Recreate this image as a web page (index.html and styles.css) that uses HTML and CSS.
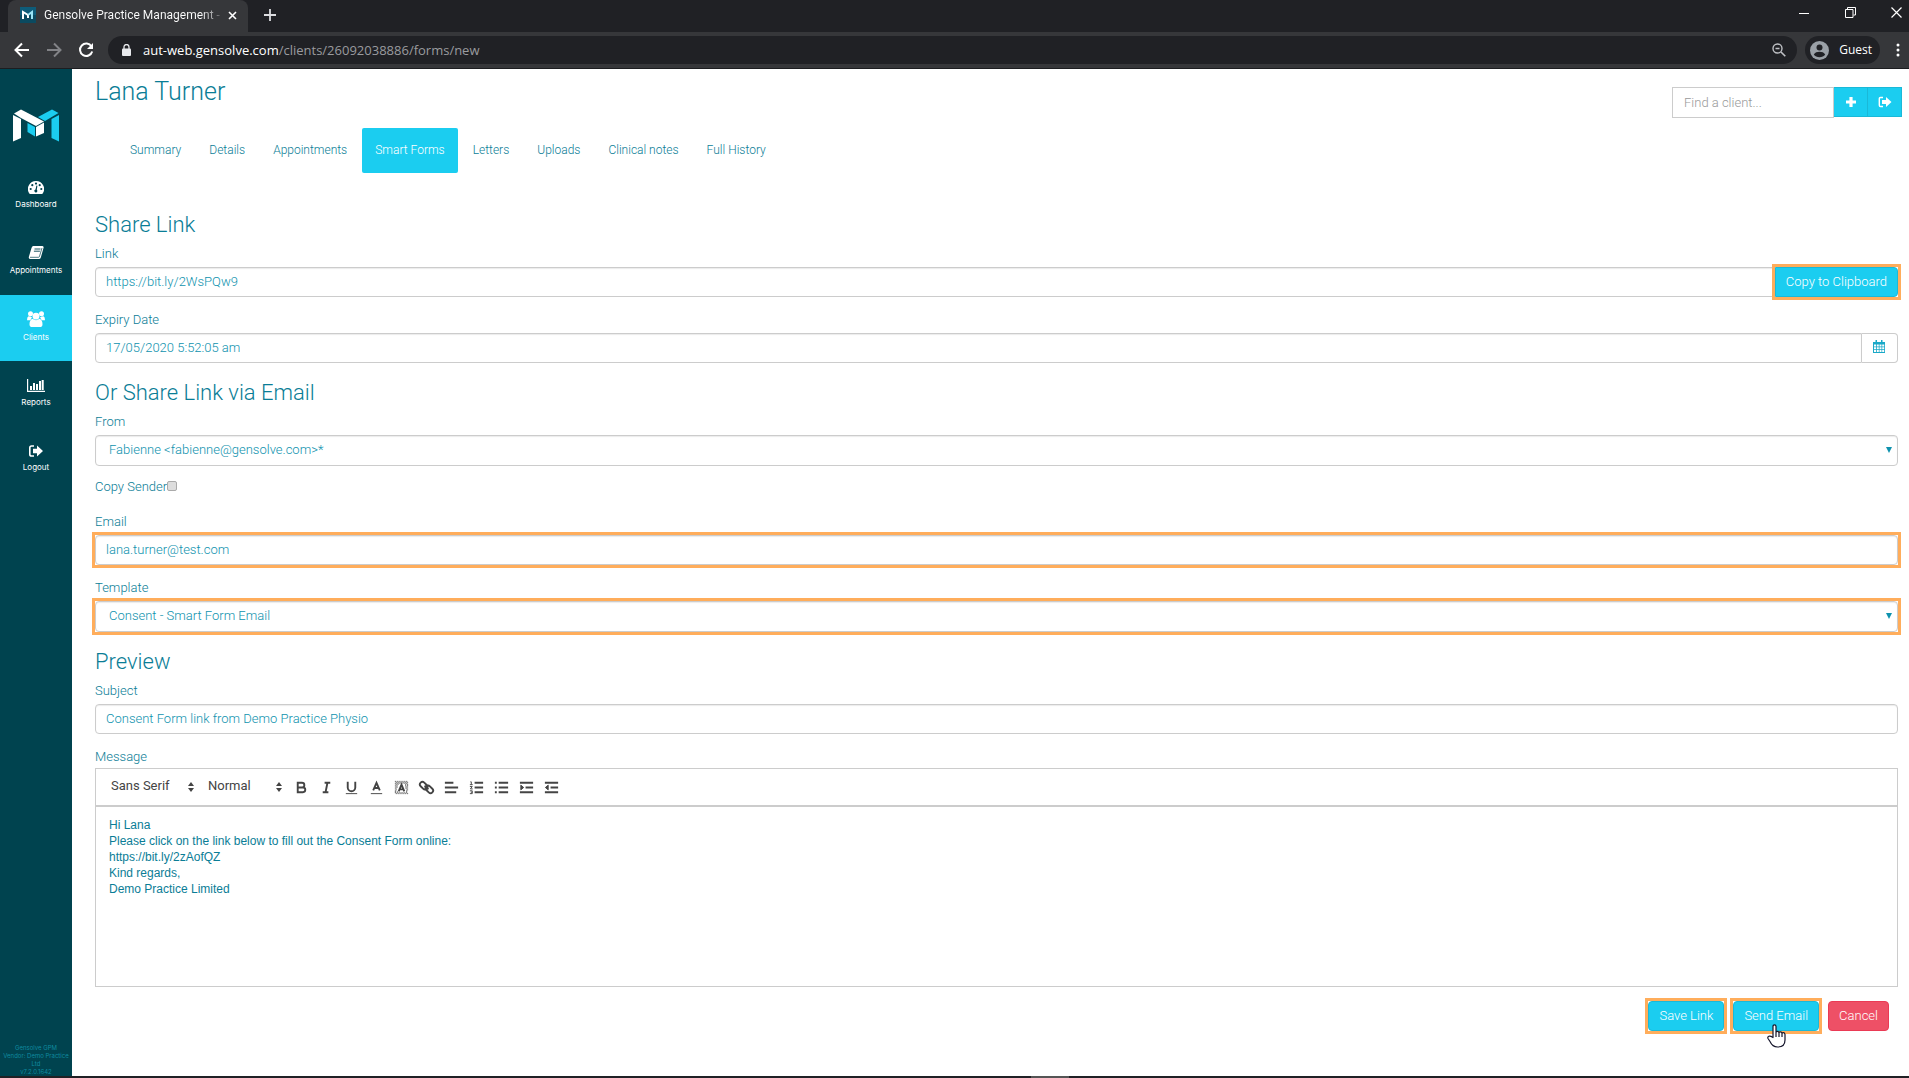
FILE: index.html
```html
<!DOCTYPE html>
<html lang="en">
<head>
    <meta charset="UTF-8">
    <meta name="viewport" content="width=device-width, initial-scale=1.0">
    <title>Gensolve Practice Management</title>
    <link rel="stylesheet" href="styles.css">
</head>
<body>
    <header class="browser">
        <div class="tab-strip">
            <div class="browser-tab">
                <svg class="favicon" viewBox="0 0 16 16">
                    <rect width="16" height="16" fill="#0b4a60"/>
                    <rect width="16" height="8" fill="#11698a" opacity=".6"/>
                    <path d="M3 12V5l5 3v3M3 5v7" fill="none" stroke="#fff" stroke-width="2"/>
                    <path d="M8 8l4-3v7" fill="none" stroke="#9be4f5" stroke-width="2"/>
                </svg>
                <span class="tab-title">Gensolve Practice Management -</span>
                <button class="tab-close" aria-label="Close tab">
                    <svg width="9" height="9" viewBox="0 0 9 9"><path d="M1 1l7 7M8 1L1 8" stroke="#fff" stroke-width="1.6"/></svg>
                </button>
            </div>
            <button class="new-tab" aria-label="New tab">
                <svg width="12" height="12" viewBox="0 0 12 12"><path d="M6 0v12M0 6h12" stroke="#dcdde0" stroke-width="1.8"/></svg>
            </button>
            <div class="window-buttons">
                <button aria-label="Minimise"><svg width="11" height="11" viewBox="0 0 11 11"><path d="M0 6.5h10" stroke="#fff"/></svg></button>
                <button aria-label="Restore"><svg width="11" height="11" viewBox="0 0 11 11"><path d="M.5 2.500h7.500v8h-7.500zM2.500 2.500v-2h8v7.500h-2" fill="none" stroke="#fff"/></svg></button>
                <button aria-label="Close"><svg width="11" height="11" viewBox="0 0 11 11"><path d="M.5.5l10 10M10.500.5l-10 10" stroke="#fff" stroke-width="1.200"/></svg></button>
            </div>
        </div>
        <div class="toolbar">
            <button aria-label="Back"><svg width="16" height="16" viewBox="0 0 16 16"><path d="M15 8H2M8 1.500L1.500 8 8 14.500" fill="none" stroke="#fff" stroke-width="2"/></svg></button>
            <button aria-label="Forward"><svg width="16" height="16" viewBox="0 0 16 16"><path d="M1 8h13M8 1.500L14.500 8 8 14.500" fill="none" stroke="#828387" stroke-width="2"/></svg></button>
            <button aria-label="Reload"><svg width="16" height="16" viewBox="0 0 16 16"><path d="M13.500 4.500A6.200 6.200 0 1 0 14.200 9.500" fill="none" stroke="#fff" stroke-width="2"/><path d="M15 1v6H9z" fill="#fff"/></svg></button>
            <div class="address">
                <svg width="9" height="12" viewBox="0 0 9 12"><rect y="4.500" width="9" height="7.500" rx="1" fill="#e8eaed"/><path d="M2 5V3a2.500 2.500 0 0 1 5 0v2" fill="none" stroke="#e8eaed" stroke-width="1.300"/></svg>
                <span class="url"><b>aut-web.gensolve.com</b>/clients/26092038886/forms/new</span>
                <svg width="14" height="14" viewBox="0 0 14 14"><circle cx="5.500" cy="5.500" r="4.500" fill="none" stroke="#bfc1c5" stroke-width="1.400"/><path d="M3.500 5.500h4M9 9l4.300 4.300" stroke="#bfc1c5" stroke-width="1.600"/></svg>
            </div>
            <button class="guest">
                <svg width="19" height="19" viewBox="0 0 19 19"><circle cx="9.500" cy="9.500" r="9.500" fill="#9aa0a6"/><circle cx="9.500" cy="6.500" r="3" fill="#202125"/><path d="M3.800 13.500c1.200-2 3.200-2.700 5.700-2.700s4.500.7 5.700 2.700c-1.300 1.700-3.200 2.700-5.700 2.700s-4.400-1-5.700-2.700z" fill="#202125"/></svg>
                Guest
            </button>
            <button class="menu" aria-label="Menu"><svg width="4" height="14" viewBox="0 0 4 14" fill="#fff"><circle cx="2" cy="2" r="1.500"/><circle cx="2" cy="7" r="1.500"/><circle cx="2" cy="12" r="1.500"/></svg></button>
        </div>
    </header>

    <div class="app">
        <nav class="sidebar">
            <svg class="logo" width="46" height="33" viewBox="0 0 46 33">
                <path d="M0 6l8 4v19l-8 3.500z" fill="#fff"/>
                <path d="M1 4.500L8 .5l23 12-8 4.500L8 9z" fill="#fff"/>
                <path d="M23 18l8-4.500V24l-8 3.500z" fill="#fff"/>
                <path d="M14.500 14l7.500 4v9.500L14.500 23z" fill="#1bcdf0"/>
                <path d="M25 8L39 .5l6.500 3.500L32 12z" fill="#1bcdf0"/>
                <path d="M46 6v26.500L38.500 29V10z" fill="#1bcdf0"/>
            </svg>
            <a href="#" class="side-link">
                <svg width="16" height="13" viewBox="0 0 16 13"><path d="M8 0a8 8 0 0 0-7 12l.8 1h12.400l.8-1A8 8 0 0 0 8 0z" fill="#fff"/><g fill="#00434f"><circle cx="2.700" cy="8" r="1.100"/><circle cx="4.300" cy="4.200" r="1.100"/><circle cx="8" cy="2.600" r="1.100"/><circle cx="11.700" cy="4.200" r="1.100"/><circle cx="13.300" cy="8" r="1.100"/><path d="M8.400 4.500l1 .3-.6 4a1.500 1.500 0 1 1-1.300-.3z"/></g></svg>
                Dashboard
            </a>
            <a href="#" class="side-link">
                <svg width="16" height="14" viewBox="0 0 16 14"><path d="M5 0h9.500q1.500.3 1 2l-2.700 9.500q-.4 1.500-2 1.500H2Q.5 13 .8 11L3.500 2Q4 .4 5 0z" fill="#fff"/><path d="M6.500 3h6M5.900 5.200h6" stroke="#00434f" stroke-width=".9"/><path d="M2 11.300h8.500q.8 0 1-1L14 2" fill="none" stroke="#00434f" stroke-width=".7"/></svg>
                Appointments
            </a>
            <a href="#" class="side-link active">
                <svg width="18" height="16" viewBox="0 0 18 16" fill="#fff"><circle cx="3.500" cy="2.700" r="2.500"/><circle cx="14.500" cy="2.700" r="2.500"/><circle cx="9" cy="5.200" r="3.400"/><path d="M5 6.200q-2-.9-3.500-.9Q0 6 0 9.200h3.300zM13 6.200q2-.9 3.500-.9Q18 6 18 9.200h-3.300z"/><path d="M5.500 7.800Q2.500 9 2.500 13.200q0 2.800 2.500 2.800h8q2.500 0 2.500-2.800 0-4.200-3-5.400Q9 10.500 5.500 7.800z"/></svg>
                Clients
            </a>
            <a href="#" class="side-link">
                <svg width="18" height="13" viewBox="0 0 18 13" fill="#fff"><path d="M0 0h1.200v11.800H18V13H0z"/><path d="M3 7h2v4H3zM6 4h2v7H6zM9 5h2v6H9zM12 2h2v9h-2zM14.700 1h2v10h-2z"/></svg>
                Reports
            </a>
            <a href="#" class="side-link">
                <svg width="14" height="12" viewBox="0 0 14 12"><path d="M5 1H2.500Q.8 1 .8 2.800v6.400Q.8 11 2.500 11H5" fill="none" stroke="#fff" stroke-width="1.600"/><path d="M4 3.700h4V.6L14 6l-6 5.400V8.300H4z" fill="#fff"/></svg>
                Logout
            </a>
            <p class="version">Gensolve GPM<br>Vendor: Demo Practice<br>Ltd<br>v7.2.0.1642</p>
        </nav>

        <main class="content">
            <div class="page-top">
                <h1>Lana Turner</h1>
                <form class="search">
                    <input type="text" placeholder="Find a client..." aria-label="Find a client">
                    <button type="button" aria-label="Add client"><svg width="12" height="12" viewBox="0 0 12 12"><path d="M6 1v10M1 6h10" stroke="#fff" stroke-width="3.200"/></svg></button>
                    <button type="button" aria-label="Open client"><svg width="14" height="12" viewBox="0 0 14 12"><path d="M5 1.500H2.500Q1.300 1.500 1.300 2.800v6.400q0 1.300 1.200 1.300H5" fill="none" stroke="#fff" stroke-width="1.400"/><path d="M4 4h4V1l5.500 5L8 11V8H4z" fill="#fff"/></svg></button>
                </form>
            </div>

            <nav class="tabs">
                <a href="#">Summary</a>
                <a href="#">Details</a>
                <a href="#">Appointments</a>
                <a href="#" class="active">Smart Forms</a>
                <a href="#">Letters</a>
                <a href="#">Uploads</a>
                <a href="#">Clinical notes</a>
                <a href="#">Full History</a>
            </nav>

            <form class="share-form">
                <h2>Share Link</h2>
                <div class="form-group">
                    <label for="link">Link</label>
                    <div class="input-group">
                        <input type="text" id="link" class="form-control" value="https://bit.ly/2WsPQw9">
                        <div class="highlight">
                            <button type="button" class="btn">Copy to Clipboard</button>
                        </div>
                    </div>
                </div>
                <div class="form-group">
                    <label for="expiry">Expiry Date</label>
                    <div class="input-group">
                        <input type="text" id="expiry" class="form-control" value="17/05/2020 5:52:05 am">
                        <button type="button" class="addon" aria-label="Pick a date"><svg width="12" height="13" viewBox="0 0 12 13"><path d="M0 2h12v11H0z" fill="#1aa9c8"/><path d="M2.500 0h1.500v3H2.500zM8 0h1.500v3H8z" fill="#1aa9c8"/><path d="M1 4.500h2v2H1zM3.800 4.500h2v2h-2zM6.500 4.500h2v2h-2zM9.200 4.500h2v2h-2zM1 7.200h2v2H1zM3.800 7.200h2v2h-2zM6.500 7.200h2v2h-2zM9.200 7.200h2v2h-2zM1 10h2v2H1zM3.800 10h2v2h-2zM6.500 10h2v2h-2zM9.200 10h2v2h-2z" fill="#fff"/></svg></button>
                    </div>
                </div>

                <h2>Or Share Link via Email</h2>
                <div class="form-group">
                    <label for="from">From</label>
                    <div class="select-wrap">
                        <select id="from" class="form-control"><option>Fabienne &lt;fabienne@gensolve.com&gt;*</option></select>
                    </div>
                </div>
                <div class="check-row">
                    <label for="copySender">Copy Sender</label><input type="checkbox" id="copySender">
                </div>
                <div class="form-group">
                    <label for="email">Email</label>
                    <div class="highlight">
                        <input type="text" id="email" class="form-control" value="lana.turner@test.com">
                    </div>
                </div>
                <div class="form-group">
                    <label for="template">Template</label>
                    <div class="select-wrap highlight">
                        <select id="template" class="form-control"><option>Consent - Smart Form Email</option></select>
                    </div>
                </div>

                <h2>Preview</h2>
                <div class="form-group">
                    <label for="subject">Subject</label>
                    <input type="text" id="subject" class="form-control" value="Consent Form link from Demo Practice Physio">
                </div>
                <label for="message">Message</label>
                <div class="editor">
                    <div class="editor-tools">
                        <div class="picker picker-font">
                            <select aria-label="Font"><option>Sans Serif</option></select>
                            <svg width="6" height="10" viewBox="0 0 6 10" fill="#444"><path d="M0 4l3-4 3 4zM0 6l3 4 3-4z"/></svg>
                        </div>
                        <div class="picker">
                            <select aria-label="Size"><option>Normal</option></select>
                            <svg width="6" height="10" viewBox="0 0 6 10" fill="#444"><path d="M0 4l3-4 3 4zM0 6l3 4 3-4z"/></svg>
                        </div>
                        <button type="button" aria-label="Bold"><svg viewBox="0 0 18 18"><path d="M5 4h4.500a2.500 2.500 0 0 1 0 5H5zM5 9h5.500a2.500 2.500 0 0 1 0 5H5z"/></svg></button>
                        <button type="button" aria-label="Italic"><svg viewBox="0 0 18 18"><path d="M7 4h6M5 14h6M8 14l2-10"/></svg></button>
                        <button type="button" aria-label="Underline"><svg viewBox="0 0 18 18"><path d="M5 3v6a4 4 0 0 0 8 0V3"/><path class="thin" d="M3 15.500h12"/></svg></button>
                        <button type="button" aria-label="Text colour"><svg viewBox="0 0 18 18"><path d="M5.500 12L9 4l3.500 8M6.500 9.500h5"/><path class="thin" d="M3 15.500h12"/></svg></button>
                        <button type="button" aria-label="Background colour"><svg viewBox="0 0 18 18"><path class="dots" d="M2 2.500h14M3 3.500h13M2 4.500h14M3 5.500h3M13 5.500h3M2 6.500h3M13 6.500h3M3 7.500h2M13 7.500h3M2 8.500h3M14 8.500h2M3 9.500h2M13 9.500h3M2 10.500h2M14 10.500h2M3 11.500h1M15 11.500h1M2 12.500h2M14 12.500h2M2 13.500h3M14 13.500h2M2 14.500h14M3 15.500h13"/><path d="M6 13l3-7 3 7M7 11h4"/></svg></button>
                        <button type="button" aria-label="Link"><svg viewBox="0 0 18 18"><path d="M7 7l4 4"/><rect x="1.500" y="4.300" width="9" height="5.400" rx="2.700" transform="rotate(45 6 7)"/><rect x="7.500" y="8.300" width="9" height="5.400" rx="2.700" transform="rotate(45 12 11)"/></svg></button>
                        <button type="button" aria-label="Align"><svg viewBox="0 0 18 18"><path d="M2 4h9M2 9h14M2 14h12"/></svg></button>
                        <button type="button" aria-label="Numbered list"><svg viewBox="0 0 18 18"><path d="M7 4h9M7 9h9M7 14h9"/><path class="thin" d="M2.500 3h1v3M2 6h3M2 8h2.500L2.500 10.500H5M2 12.500h2.500v3H2M3 14h1.500"/></svg></button>
                        <button type="button" aria-label="Bullet list"><svg viewBox="0 0 18 18"><path d="M6 4h10M6 9h10M6 14h10M2 4h2M2 9h2M2 14h2"/></svg></button>
                        <button type="button" aria-label="Indent"><svg viewBox="0 0 18 18"><path d="M2 4h14M8 9h8M2 14h14"/><path class="fill" d="M3 6.500v5L6 9z"/></svg></button>
                        <button type="button" aria-label="Outdent"><svg viewBox="0 0 18 18"><path d="M2 4h14M8 9h8M2 14h14"/><path class="fill" d="M5.500 6.500v5L2.500 9z"/></svg></button>
                    </div>
                    <textarea id="message" rows="10">Hi Lana
Please click on the link below to fill out the Consent Form online:
https://bit.ly/2zAofQZ
Kind regards,
Demo Practice Limited</textarea>
                </div>

                <div class="actions">
                    <div class="highlight">
                        <button type="button" class="btn">Save Link</button>
                    </div>
                    <div class="highlight send">
                        <button type="button" class="btn">Send Email</button>
                        <svg class="pointer" width="19" height="24" viewBox="0 0 19 24"><path d="M6 13.500V2.500Q6 .8 7.500.8T9 2.500v6q0-1.200 1.400-1.200T12 8.800q.1-.9 1.400-.9T15 9.400q.2-.7 1.400-.7T18 10.300V16q0 7-7.500 7-5 0-7.500-5.500L1 14.500q-.6-1.600.8-2.200T6 13.500zM9 8.500V13M12 9v4M15 9.500V13" fill="#fff" stroke="#14142a" stroke-width="1.200" stroke-linejoin="round"/></svg>
                    </div>
                    <button type="button" class="btn btn-danger">Cancel</button>
                </div>
            </form>
        </main>
    </div>
    <footer class="taskbar"></footer>
</body>
</html>
```
FILE: styles.css
```css
* {
    margin: 0;
    padding: 0;
    box-sizing: border-box;
}

body {
    display: flex;
    flex-direction: column;
    min-height: 100vh;
    font-family: Roboto, sans-serif;
    font-size: 13px;
    font-weight: 300;
    line-height: 18px;
    color: #0a7d96;
    background-color: #fff;
}

button, input, select, textarea {
    font: inherit;
    color: inherit;
}

button {
    border: none;
    background: none;
    cursor: pointer;
}

svg {
    display: block;
    flex-shrink: 0;
}

a {
    color: inherit;
    text-decoration: none;
}

/* Browser window */
.browser {
    font-family: "Open Sans", sans-serif;
    font-weight: 400;
    color: #fff;
    background-color: #202125;
    border-bottom: 1px solid #1c1d20;
}

.tab-strip {
    display: flex;
    height: 32px;
    padding-left: 8px;
}

.browser-tab {
    display: flex;
    align-items: center;
    width: 240px;
    padding: 0 11px 2px 12px;
    border-radius: 8px 8px 0 0;
    background-color: #36373a;
}

.favicon {
    width: 16px;
    height: 16px;
    margin-right: 8px;
}

.tab-title {
    flex: 1;
    white-space: nowrap;
    font-family: Roboto, sans-serif;
    font-size: 12px;
    background: linear-gradient(90deg, #fff 88%, #55565a 100%);
    background-clip: text;
    color: transparent;
}

.tab-close {
    margin-left: 6px;
}

.new-tab {
    padding: 0 16px 2px;
}

.window-buttons {
    display: flex;
    gap: 35px;
    align-items: center;
    height: 24px;
    margin-left: auto;
    padding-right: 7px;
}

.toolbar {
    display: flex;
    align-items: center;
    gap: 16px;
    height: 36px;
    padding: 0 9px 0 14px;
    background-color: #36373a;
}

.address {
    display: flex;
    flex: 1;
    align-items: center;
    gap: 12px;
    height: 28px;
    margin-left: -2px;
    padding: 0 11px 0 14px;
    border-radius: 14px;
    background-color: #202125;
}

.url {
    flex: 1;
    font-size: 13px;
    color: #9a9b9f;
}

.url b {
    font-weight: 400;
    color: #fff;
}

.guest {
    display: flex;
    align-items: center;
    gap: 10px;
    height: 28px;
    margin-left: -8px;
    padding: 0 8px 0 5px;
    border-radius: 14px;
    font-size: 12px;
    background-color: #202125;
}

/* Layout */
.app {
    display: flex;
    flex: 1;
}

.sidebar {
    display: flex;
    flex-direction: column;
    width: 72px;
    padding-top: 40px;
    background-color: #00434f;
}

.logo {
    margin: 0 auto 21px 13px;
}

.side-link {
    display: flex;
    flex-direction: column;
    align-items: center;
    justify-content: center;
    gap: 4px;
    height: 66px;
    padding-bottom: 2px;
    font-family: Inter, sans-serif;
    font-size: 8px;
    font-weight: 400;
    line-height: 12px;
    color: #fff;
}

.side-link.active {
    background-color: #1bcdf0;
}

.version {
    margin-top: auto;
    font-family: Inter, sans-serif;
    font-size: 6px;
    font-weight: 400;
    line-height: 8px;
    text-align: center;
    color: #0f8a9f;
}

.content {
    flex: 1;
    padding: 8px 11px 0 23px;
}

h1, h2 {
    font-size: 25px;
    font-weight: 300;
    line-height: 30px;
}

h2 {
    margin: 16px 0 6px;
    font-size: 22px;
    line-height: 28px;
}

.page-top {
    display: flex;
    justify-content: space-between;
    height: 51px;
}

.search {
    display: flex;
    height: 31px;
    margin: 10px -4px 0 0;
}

.search input {
    width: 162px;
    padding: 0 11px;
    border: 1px solid #ccc;
}

.search input::placeholder {
    color: #999;
}

.search button {
    display: flex;
    align-items: center;
    justify-content: center;
    width: 34px;
    height: 30px;
    border: 1px solid #1ab9d8;
    border-left-width: 0;
    background-color: #1bcdf0;
}

.tabs {
    display: flex;
    gap: 2px;
    margin: 0 0 38px 22px;
    font-size: 12px;
}

.tabs a {
    padding: 13px 13px 14px;
    border-radius: 2px;
}

.tabs .active {
    color: #fff;
    background-color: #1bcdf0;
}

/* Form */
label {
    display: block;
    margin-bottom: 4px;
}

.form-group {
    margin-bottom: 14px;
}

.form-control {
    display: block;
    width: 100%;
    height: 30px;
    padding: 0 10px 2px;
    border: 1px solid #ccc;
    border-radius: 4px;
    color: #0e92ae;
    background-color: #fff;
    box-shadow: inset 0 1px 1px rgba(0, 0, 0, 0.08);
}

.highlight {
    outline: 3px solid #ffad5b;
}

.input-group {
    display: flex;
}

.input-group .form-control {
    flex: 1;
    border-radius: 4px 0 0 4px;
}

.btn {
    display: block;
    height: 30px;
    padding: 0 10px;
    border: 1px solid #1ab9d8;
    border-radius: 4px;
    color: #fff;
    background-color: #1bcdf0;
}

.input-group .btn {
    border-radius: 0 4px 4px 0;
}

.btn-danger {
    border-color: #ea3a55;
    background-color: #ee5066;
}

.addon {
    width: 36px;
    padding: 0 11px 3px;
    border: 1px solid #ccc;
    border-left: none;
    border-radius: 0 4px 4px 0;
}

.select-wrap {
    position: relative;
}

.select-wrap .form-control {
    height: 31px;
    padding-left: 13px;
    appearance: none;
}

.select-wrap::after {
    content: "";
    position: absolute;
    top: 12px;
    right: 6px;
    border: 3px solid transparent;
    border-top: 6px solid #0e92ae;
    border-bottom: none;
    pointer-events: none;
}

.check-row {
    display: flex;
    align-items: center;
    margin: -2px 0 17px;
}

.check-row label {
    margin: 0;
}

.check-row input {
    appearance: none;
    width: 10px;
    height: 10px;
    margin-bottom: 2px;
    border: 1px solid #aaa;
    border-radius: 2px;
    background-color: #ddd;
}

/* Message editor */
.editor {
    margin-top: -2px;
    border: 1px solid #ccc;
}

.editor-tools {
    display: flex;
    align-items: center;
    height: 38px;
    padding-left: 15px;
    border-bottom: 2px solid #ccc;
    color: #444;
}

.picker {
    display: flex;
    align-items: center;
    justify-content: space-between;
    width: 74px;
    margin-right: 7px;
    font-weight: 400;
}

.picker-font {
    width: 83px;
    margin-right: 14px;
}

.picker select {
    padding-bottom: 2px;
    border: none;
    background: none;
    appearance: none;
}

.editor-tools button {
    width: 25px;
    padding: 0 4px;
}

.editor-tools button svg {
    width: 17px;
    height: 17px;
    fill: none;
    stroke: #444;
    stroke-width: 2;
}

.editor-tools .thin {
    stroke-width: 1;
}

.editor-tools .dots {
    stroke-width: 1;
    stroke-dasharray: 1 1;
}

.editor-tools .fill {
    fill: #444;
    stroke-width: 1;
}

textarea {
    display: block;
    width: 100%;
    height: 179px;
    padding: 10px 13px;
    border: none;
    resize: none;
    font-family: "Liberation Sans", Arial, sans-serif;
    font-size: 12px;
    font-weight: 400;
    line-height: 16px;
}

.actions {
    display: flex;
    justify-content: flex-end;
    gap: 9px;
    padding: 14px 9px 0 0;
}

.send {
    position: relative;
}

/* Hand cursor over the send button */
.pointer {
    position: absolute;
    left: 34px;
    top: 23px;
}

.taskbar {
    height: 2px;
    background: linear-gradient(90deg, #202125 54%, #555 54%, #555 56%, #202125 56%);
}
```
